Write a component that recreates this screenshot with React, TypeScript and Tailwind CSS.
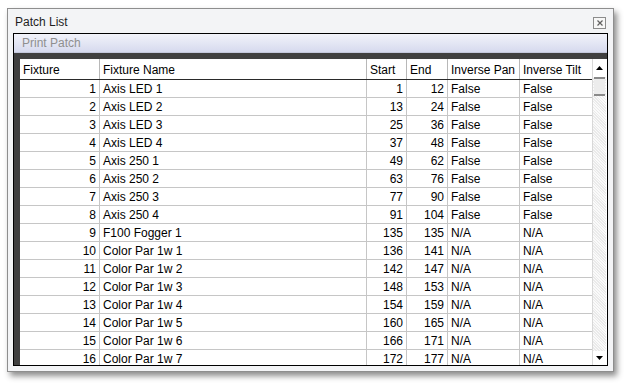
import React from 'react';

type Row = { id: number; name: string; start: number; end: number; pan: string; tilt: string };

const rows: Row[] = [
  { id: 1, name: 'Axis LED 1', start: 1, end: 12, pan: 'False', tilt: 'False' },
  { id: 2, name: 'Axis LED 2', start: 13, end: 24, pan: 'False', tilt: 'False' },
  { id: 3, name: 'Axis LED 3', start: 25, end: 36, pan: 'False', tilt: 'False' },
  { id: 4, name: 'Axis LED 4', start: 37, end: 48, pan: 'False', tilt: 'False' },
  { id: 5, name: 'Axis 250 1', start: 49, end: 62, pan: 'False', tilt: 'False' },
  { id: 6, name: 'Axis 250 2', start: 63, end: 76, pan: 'False', tilt: 'False' },
  { id: 7, name: 'Axis 250 3', start: 77, end: 90, pan: 'False', tilt: 'False' },
  { id: 8, name: 'Axis 250 4', start: 91, end: 104, pan: 'False', tilt: 'False' },
  { id: 9, name: 'F100 Fogger 1', start: 135, end: 135, pan: 'N/A', tilt: 'N/A' },
  { id: 10, name: 'Color Par 1w 1', start: 136, end: 141, pan: 'N/A', tilt: 'N/A' },
  { id: 11, name: 'Color Par 1w 2', start: 142, end: 147, pan: 'N/A', tilt: 'N/A' },
  { id: 12, name: 'Color Par 1w 3', start: 148, end: 153, pan: 'N/A', tilt: 'N/A' },
  { id: 13, name: 'Color Par 1w 4', start: 154, end: 159, pan: 'N/A', tilt: 'N/A' },
  { id: 14, name: 'Color Par 1w 5', start: 160, end: 165, pan: 'N/A', tilt: 'N/A' },
  { id: 15, name: 'Color Par 1w 6', start: 166, end: 171, pan: 'N/A', tilt: 'N/A' },
  { id: 16, name: 'Color Par 1w 7', start: 172, end: 177, pan: 'N/A', tilt: 'N/A' },
];

const cols = 'grid grid-cols-[80px_267px_40px_41px_72px_72px]';
const cell = 'h-[18px] pt-[1px] leading-[17px] border-b border-r border-[#c6c6c6] whitespace-nowrap overflow-hidden';
const head = 'h-[20px] pt-[2px] leading-[18px] border-r border-[#b8b8b8] px-[3px] whitespace-nowrap overflow-hidden';

function CloseBox() {
  return (
    <div className="mt-[3px] w-[13px] h-[12px] border border-[#8c8c8c] bg-[#f7f7f7] flex items-center justify-center">
      <svg width="6" height="6" viewBox="0 0 6 6">
        <path d="M0.5 0.5 L5.5 5.5 M5.5 0.5 L0.5 5.5" stroke="#606060" strokeWidth="1.2" />
      </svg>
    </div>
  );
}

function Scrollbar() {
  return (
    <div className="w-[14px] flex flex-col bg-[repeating-linear-gradient(45deg,#eaeaea_0px,#eaeaea_1px,#fafafa_1px,#fafafa_2px)] border-l border-[#d8d8d8]">
      <div className="h-[18px] bg-white flex items-center justify-center">
        <svg width="7" height="4" viewBox="0 0 7 4"><path d="M3.5 0 L7 4 L0 4 Z" fill="#000" /></svg>
      </div>
      <div className="h-[19px] bg-[#ececec] border-t-2 border-b-2 border-[#8a8a8a] mx-[1px]" />
      <div className="flex-1" />
      <div className="h-[14px] bg-white flex items-center justify-center">
        <svg width="7" height="4" viewBox="0 0 7 4"><path d="M0 0 L7 0 L3.5 4 Z" fill="#000" /></svg>
      </div>
    </div>
  );
}

export default function App() {
  return (
    <div className="w-[627px] h-[385px] bg-white overflow-hidden pt-[8px] pl-[7px] font-['Liberation_Sans',Arial,sans-serif] text-[12px] text-black">
      <div className="w-[607px] h-[364px] border border-[#8e8e8e] bg-[#f3f4f6] shadow-[3px_4px_6px_rgba(0,0,0,0.45)] flex flex-col">
        <div className="h-[24px] flex items-center justify-between pl-[7px] pr-[7px] shrink-0">
          <span className="pt-[2px] text-[12px] text-[#1e1e1e]">Patch List</span>
          <CloseBox />
        </div>
        <div className="flex-1 mx-[5px] mb-[5px] border border-black flex flex-col overflow-hidden min-h-0">
          <div className="h-[19px] shrink-0 bg-gradient-to-b from-[#f2f3fa] to-[#d6daee] border-b border-[#c4c8dc] pl-[8px] pt-[1px] leading-[17px] text-[#8f8f8f]">
            Print Patch
          </div>
          <div className="flex-1 min-h-0 bg-[#404040] pt-[6px] pl-[6px] flex">
            <div className="flex-1 bg-white flex overflow-hidden">
              <div className="w-[572px] overflow-hidden">
                <div className={`${cols} border-b border-[#2a2a2a]`}>
                  <div className={head}>Fixture</div>
                  <div className={head}>Fixture Name</div>
                  <div className={head}>Start</div>
                  <div className={head}>End</div>
                  <div className={head}>Inverse Pan</div>
                  <div className={`${head} border-r-0`}>Inverse Tilt</div>
                </div>
                {rows.map((r) => (
                  <div key={r.id} className={cols}>
                    <div className={`${cell} text-right pr-[3px]`}>{r.id}</div>
                    <div className={`${cell} pl-[3px]`}>{r.name}</div>
                    <div className={`${cell} text-right pr-[3px]`}>{r.start}</div>
                    <div className={`${cell} text-right pr-[3px]`}>{r.end}</div>
                    <div className={`${cell} pl-[3px]`}>{r.pan}</div>
                    <div className={`${cell} pl-[3px] border-r-0`}>{r.tilt}</div>
                  </div>
                ))}
              </div>
              <Scrollbar />
            </div>
          </div>
        </div>
      </div>
    </div>
  );
}
